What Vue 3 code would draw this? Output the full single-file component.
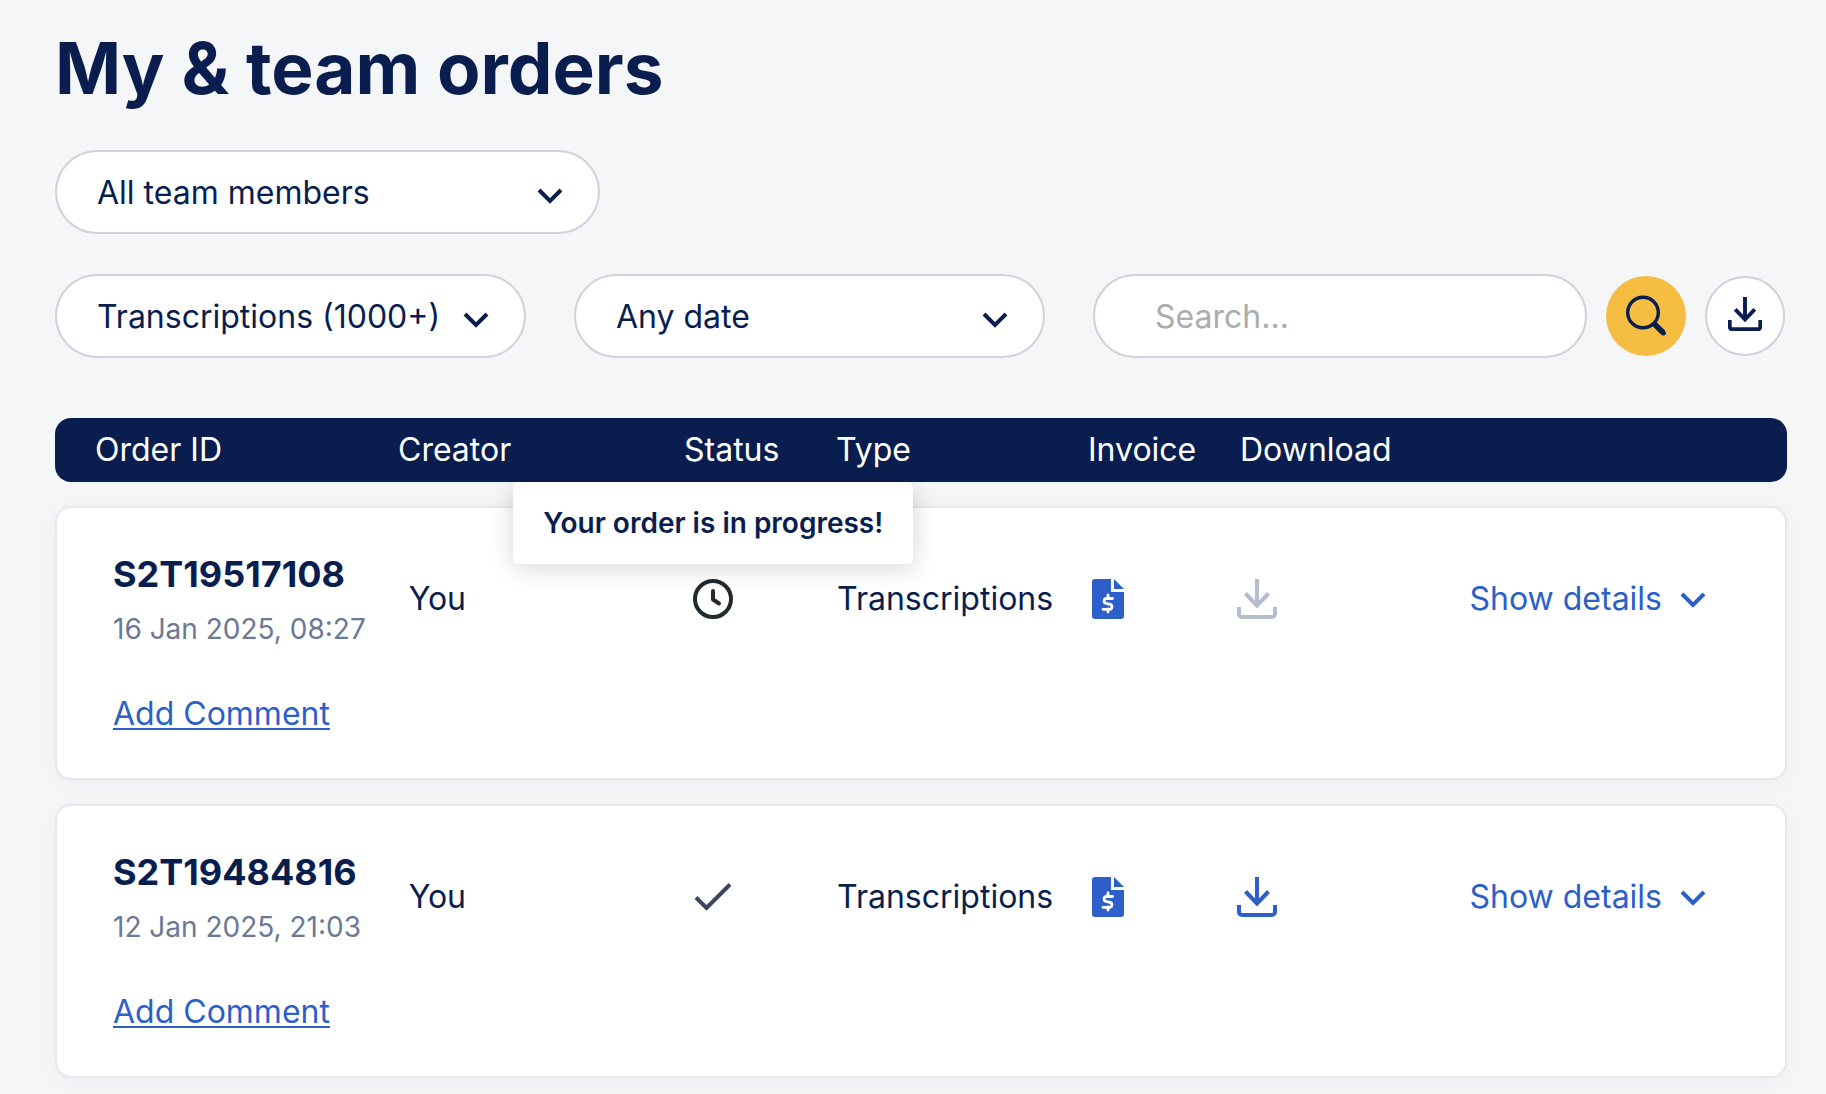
<template>
  <main class="orders-page">
    <h1>My &amp; team orders</h1>

    <div class="select-wrap team-select">
      <select v-model="member" aria-label="Team member">
        <option>All team members</option>
      </select>
      <svg class="chevron" viewBox="0 0 28 28" aria-hidden="true"><path d="M3 12l11 11 11-11" /></svg>
    </div>

    <div class="filters">
      <div class="select-wrap filter-select">
        <select v-model="orderType" aria-label="Order type">
          <option>Transcriptions (1000+)</option>
        </select>
        <svg class="chevron" viewBox="0 0 28 28" aria-hidden="true"><path d="M3 12l11 11 11-11" /></svg>
      </div>
      <div class="select-wrap filter-select">
        <select v-model="dateRange" aria-label="Date">
          <option>Any date</option>
        </select>
        <svg class="chevron" viewBox="0 0 28 28" aria-hidden="true"><path d="M3 12l11 11 11-11" /></svg>
      </div>
      <form class="search" @submit.prevent>
        <input v-model="query" type="text" placeholder="Search..." aria-label="Search orders" />
        <button class="btn-round btn-search" type="submit" aria-label="Search">
          <svg viewBox="0 0 80 80" aria-hidden="true">
            <circle cx="37" cy="36.5" r="15.3" stroke-width="3.4" />
            <path d="M47.5 47l9.5 9.5" stroke-width="5.6" />
            <path d="M54 53.5l3.5 3.5" stroke-width="4.8" stroke-linecap="round" />
          </svg>
        </button>
        <button class="btn-round btn-export" type="button" aria-label="Download list">
          <svg viewBox="0 0 40 40" aria-hidden="true">
            <path d="M20 0v27M8.5 14.5l11.5 12 11.5-12M2 27v8a3 3 0 0 0 3 3h30a3 3 0 0 0 3-3v-8" />
          </svg>
        </button>
      </form>
    </div>

    <table class="orders">
      <thead>
        <tr class="head-row">
          <th v-for="col in columns" :key="col" scope="col">{{ col }}</th>
          <td></td>
        </tr>
      </thead>
      <tbody>
        <tr v-for="order in orders" :key="order.id" class="card">
          <td>
            <div class="order-id">{{ order.id }}</div>
            <div class="order-date">{{ order.date }}</div>
          </td>
          <td>{{ order.creator }}</td>
          <td>
            <div class="status">
              <svg v-if="order.inProgress" class="icon clock" viewBox="0 0 40 40" role="img" aria-label="In progress">
                <circle cx="20" cy="20" r="18" />
                <path d="M20 12v8.5l6 4" />
              </svg>
              <svg v-else class="icon check" viewBox="0 0 40 40" role="img" aria-label="Done">
                <path d="M3 20.5l10.5 10.5L37 7.5" />
              </svg>
              <div v-if="order.inProgress" class="tooltip" role="tooltip">Your order is in progress!</div>
            </div>
          </td>
          <td>{{ order.type }}</td>
          <td>
            <button class="btn-icon" type="button" aria-label="Invoice">
              <svg class="icon invoice" viewBox="0 0 32 40" aria-hidden="true">
                <path d="M3 0h16v13h13v24a3 3 0 0 1-3 3H3a3 3 0 0 1-3-3V3a3 3 0 0 1 3-3z" />
                <path d="M22 0l10 10H22z" />
                <path class="mark" d="M20.5 19.5h-6a2.5 2.5 0 0 0-.6 4.9l4.2 1a2.5 2.5 0 0 1-.6 4.9H11M16 16v3.5M16 30v3" />
              </svg>
            </button>
          </td>
          <td>
            <button class="btn-icon" type="button" :disabled="order.inProgress" aria-label="Download">
              <svg class="icon download" viewBox="0 0 40 40" aria-hidden="true">
                <path d="M20 0v27M8.5 14.5l11.5 12 11.5-12M2 28v7a3 3 0 0 0 3 3h30a3 3 0 0 0 3-3v-7" />
              </svg>
            </button>
          </td>
          <td class="details-cell">
            <button class="btn-details" type="button">
              Show details
              <svg class="chevron" viewBox="0 0 28 28" aria-hidden="true"><path d="M3 9l11 11 11-11" /></svg>
            </button>
          </td>
          <td class="comment-cell">
            <a href="#">Add Comment</a>
          </td>
        </tr>
      </tbody>
    </table>
  </main>
</template>

<script setup>
import { ref } from 'vue'

const member = ref('All team members')
const orderType = ref('Transcriptions (1000+)')
const dateRange = ref('Any date')
const query = ref('')

const columns = ['Order ID', 'Creator', 'Status', 'Type', 'Invoice', 'Download']

const orders = [
  { id: 'S2T19517108', date: '16 Jan 2025, 08:27', creator: 'You', type: 'Transcriptions', inProgress: true },
  { id: 'S2T19484816', date: '12 Jan 2025, 21:03', creator: 'You', type: 'Transcriptions', inProgress: false }
]
</script>

<style>
body {
  margin: 0;
  background: #f4f6f8;
}
</style>

<style scoped>
.orders-page {
  padding: 24px 39px 16px 55px;
  font-family: Inter, "Liberation Sans", sans-serif;
  font-size: 32px;
  line-height: 48px;
  color: #091e4f;
}

h1 {
  margin: 0 0 38px;
  font-size: 71px;
  line-height: 88px;
  font-weight: 700;
}

button,
input,
select {
  font: inherit;
  color: inherit;
}

button {
  padding: 0;
  border: 0;
  background: none;
  cursor: pointer;
}

svg {
  display: block;
  fill: none;
  stroke: currentColor;
}

.select-wrap {
  display: grid;
  align-items: center;
}

.select-wrap > * {
  grid-area: 1 / 1;
}

.select-wrap select,
.search input {
  box-sizing: border-box;
  width: 100%;
  min-width: 0;
  height: 84px;
  border: 2px solid #cdd2dc;
  border-radius: 42px;
  background: #fff;
  outline: none;
}

.select-wrap select {
  appearance: none;
  padding: 2px 64px 0 40px;
}

.chevron {
  width: 28px;
  height: 28px;
  stroke-width: 4;
}

.select-wrap .chevron {
  justify-self: end;
  margin-right: 36px;
  pointer-events: none;
}

.team-select {
  max-width: 545px;
}

.filters {
  display: flex;
  gap: 48px;
  margin: 40px 2px 60px 0;
}

.filter-select {
  flex: 471 1 0;
  min-width: 0;
}

.search {
  flex: 692 1 0;
  min-width: 0;
  display: flex;
  align-items: center;
  gap: 19px;
}

.search input {
  flex: 1;
  padding: 0 60px;
}

.search input::placeholder {
  color: #acacac;
  opacity: 1;
}

.btn-round {
  flex: none;
  box-sizing: border-box;
  display: grid;
  place-items: center;
  width: 80px;
  height: 80px;
  border-radius: 50%;
}

.btn-search {
  background: #f5bd42;
}

.btn-search svg {
  width: 80px;
  height: 80px;
}

.btn-export {
  padding-bottom: 4px;
  border: 2px solid #cdd2dc;
  background: #fff;
}

.btn-export svg {
  width: 34px;
  height: 34px;
  stroke-width: 4.6;
}

.orders,
.orders thead,
.orders tbody {
  display: block;
}

.orders tbody {
  display: grid;
  gap: 24px;
  margin-top: 24px;
}

.orders th,
.orders td {
  min-width: 0;
  padding: 0;
  text-align: left;
  font-weight: 400;
  white-space: nowrap;
}

.head-row {
  display: grid;
  grid-template-columns: 303fr 286fr 152fr 252fr 152fr 507fr;
  padding: 8px 40px;
  border-radius: 16px;
  background: #091e4f;
  color: #fff;
}

.head-row td {
  display: none;
}

.card {
  display: grid;
  grid-template-columns: 296fr 285fr 144fr 255fr 145fr 231fr 240fr;
  align-items: center;
  padding: 36px 78px 40px 56px;
  border: 2px solid #e6e8ee;
  border-radius: 16px;
  background: #fff;
  box-shadow: 0 4px 24px rgba(9, 30, 79, 0.04);
}

.order-id {
  font-size: 36px;
  line-height: 60px;
  font-weight: 700;
}

.order-date {
  font-size: 28px;
  line-height: 50px;
  color: #6b7896;
}

.icon {
  width: 40px;
  height: 40px;
  stroke-width: 4;
}

.status {
  position: relative;
  width: 40px;
}

.clock {
  color: #22292f;
  stroke-linecap: round;
  stroke-linejoin: round;
}

.check {
  color: #3a4560;
}

.tooltip {
  position: absolute;
  bottom: calc(100% + 15px);
  left: 50%;
  z-index: 1;
  transform: translateX(-50%);
  padding: 20px 30px;
  border-radius: 6px;
  background: #fff;
  box-shadow: 0 4px 24px rgba(0, 0, 0, 0.16);
  font-size: 28px;
  line-height: 42px;
  font-weight: 600;
}

.btn-icon {
  display: block;
  color: #2d5fc9;
}

.btn-icon:disabled {
  color: #b4bdcb;
  cursor: default;
}

.invoice {
  width: 32px;
  fill: currentColor;
  stroke: none;
}

.invoice .mark {
  fill: none;
  stroke: #fff;
  stroke-width: 2.8;
  stroke-linecap: round;
}

.card .details-cell {
  justify-self: end;
}

.btn-details {
  display: flex;
  align-items: center;
  gap: 17px;
  color: #2d5fc9;
}

.card .comment-cell {
  grid-column: 1 / -1;
  margin-top: 36px;
}

.comment-cell a {
  color: #2d5fc9;
  text-underline-offset: 3px;
  text-decoration-thickness: 2px;
}
</style>
